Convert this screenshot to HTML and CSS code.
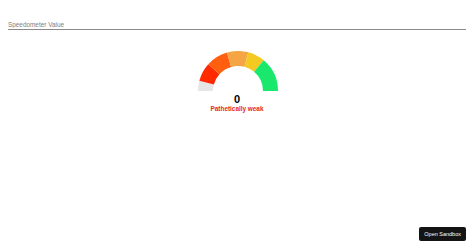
FILE: index.html
```html
<!DOCTYPE html>
<html>
<head>
<meta charset="utf-8">
<link rel="stylesheet" href="styles.css">
</head>
<body>
<div class="field">
  <input class="value-input" type="text" placeholder="Speedometer Value">
</div>
<div class="gauge">
  <svg class="gauge-svg" width="80" height="40" viewBox="0 0 80 40">
    <g fill="none" stroke-width="15">
      <path d="M7.5 40 A32.5 32.5 0 0 1 8.61 31.59" stroke="#e6e6e6"/>
      <path d="M8.61 31.59 A32.5 32.5 0 0 1 15.85 18.25" stroke="#ff2a00"/>
      <path d="M15.85 18.25 A32.5 32.5 0 0 1 31.04 8.76" stroke="#ff5f0f"/>
      <path d="M31.04 8.76 A32.5 32.5 0 0 1 48.41 8.61" stroke="#f5a544"/>
      <path d="M48.41 8.61 A32.5 32.5 0 0 1 60.89 15.10" stroke="#f4c922"/>
      <path d="M60.89 15.10 A32.5 32.5 0 0 1 72.5 40" stroke="#19e86c"/>
    </g>
  </svg>
  <div class="gauge-value">0</div>
  <div class="gauge-label">Pathetically weak</div>
</div>
<a class="sandbox-btn">Open Sandbox</a>
</body>
</html>
```
FILE: styles.css
```css
html, body {
  margin: 0;
  padding: 0;
  background: #ffffff;
}
body {
  padding: 18px 8px 0 8px;
  font-family: "Liberation Sans", Arial, sans-serif;
}
.field {
  display: flex;
}
.value-input {
  flex: 1;
  border: none;
  border-bottom: 1px solid #8a8a8a;
  padding: 2px 0 0 0;
  margin: 0;
  font-family: "Liberation Sans", Arial, sans-serif;
  font-size: 6.4px;
  height: 9px;
  outline: none;
  color: #333;
}
.value-input::placeholder {
  color: #808080;
}
.gauge {
  display: flex;
  flex-direction: column;
  align-items: center;
  margin-top: 21px;
}
.gauge-svg {
  display: block;
  margin-left: 1px;
}
.gauge-value {
  margin-top: 2px;
  font-size: 11px;
  font-weight: bold;
  color: #000;
  line-height: 12px;
}
.gauge-label {
  font-size: 6.4px;
  font-weight: bold;
  color: #e8261c;
  line-height: 8px;
}
.sandbox-btn {
  position: fixed;
  right: 8px;
  bottom: 7px;
  background: #141414;
  color: #fff;
  font-size: 5.5px;
  padding: 4px 5px;
  border-radius: 2px;
  line-height: 6px;
}
```
